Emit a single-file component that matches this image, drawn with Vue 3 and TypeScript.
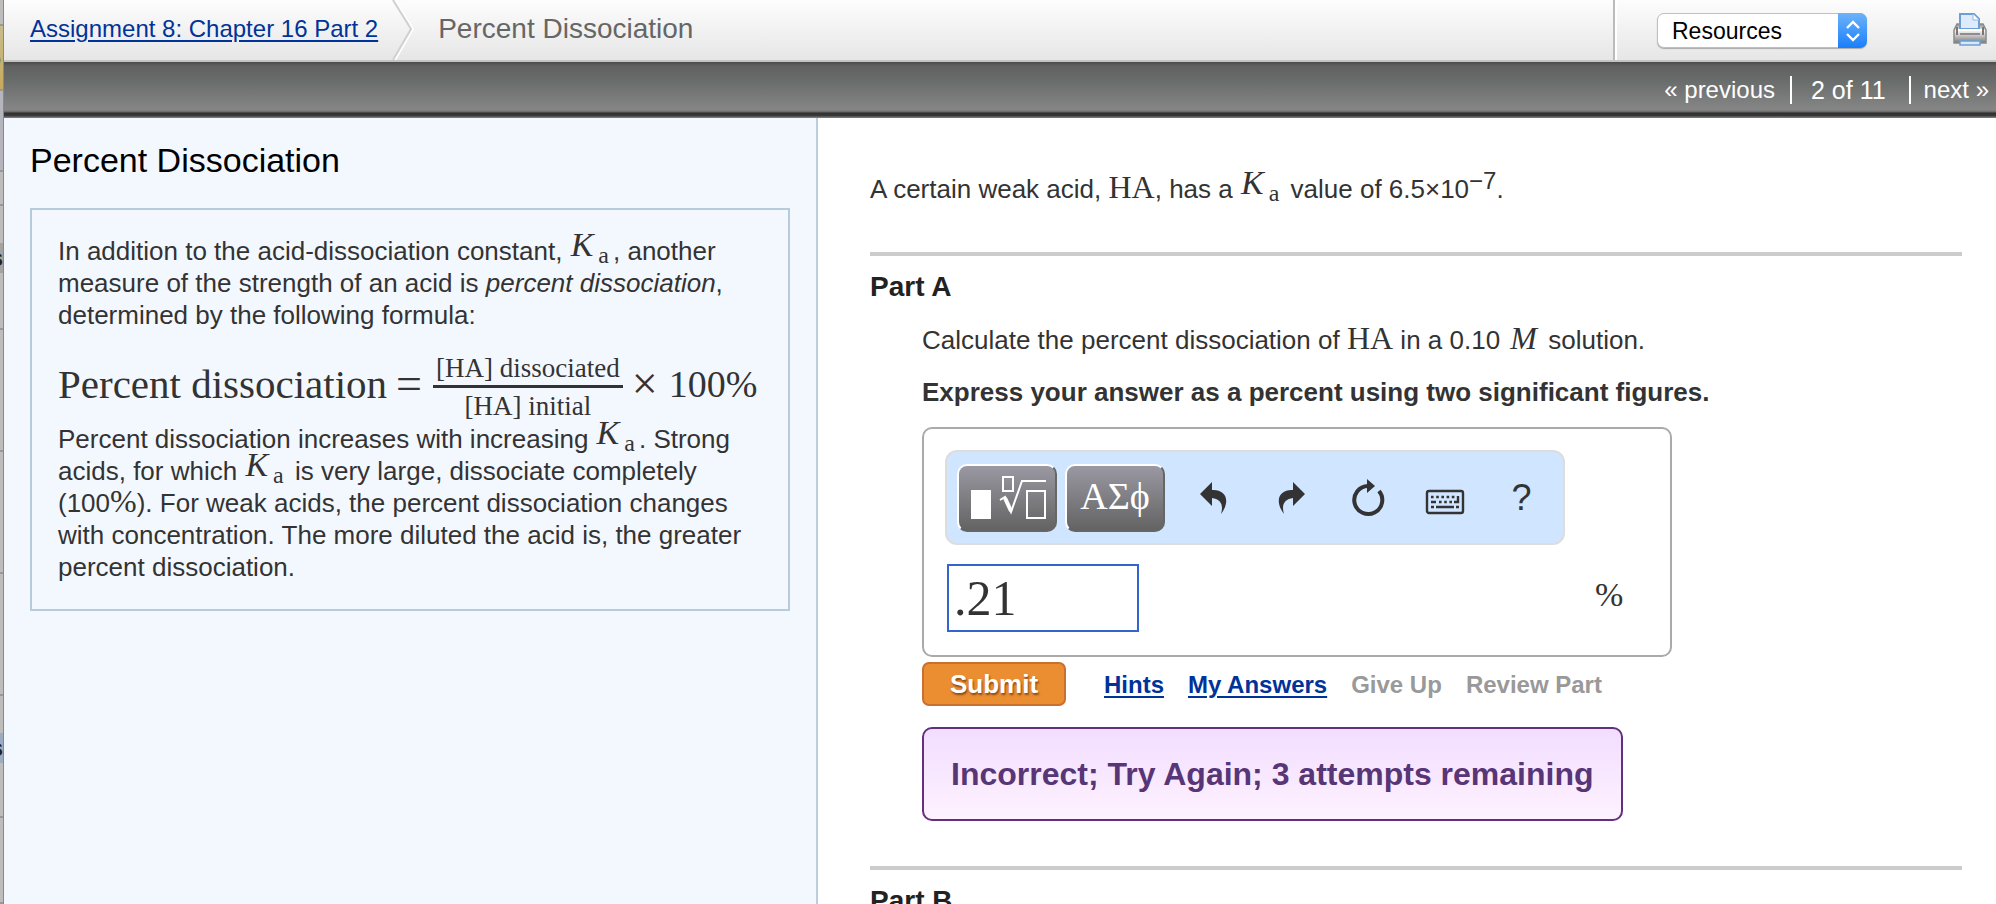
<script setup lang="ts">
import { ref } from 'vue'

interface Slice {
  height: number
  tone: string
  glyph?: string
}

const answer = ref('.21')
const resource = ref('Resources')

// Sliver of the window that sits behind this one, top to bottom.
const slices: Slice[] = [
  { height: 26, tone: 'grey' },
  { height: 65, tone: 'gold', glyph: '●' },
  { height: 81, tone: 'cool' },
  { height: 34, tone: 'grey' },
  { height: 37, tone: 'grey open' },
  { height: 30, tone: 'dark', glyph: 's' },
  { height: 57, tone: 'grey' },
  { height: 122, tone: 'grey' },
  { height: 122, tone: 'grey' },
  { height: 122, tone: 'grey' },
  { height: 37, tone: 'grey open' },
  { height: 30, tone: 'blue', glyph: 's' },
  { height: 55, tone: 'grey' },
  { height: 86, tone: 'grey' },
]
</script>

<template>
  <div class="screen">
    <div class="behind" aria-hidden="true">
      <div
        v-for="(s, i) in slices"
        :key="i"
        class="slice"
        :class="s.tone"
        :style="{ height: s.height + 'px' }"
      >{{ s.glyph }}</div>
    </div>

    <div class="page">
      <header class="crumbs">
        <a class="crumb-link" href="#">Assignment 8: Chapter 16 Part 2</a>
        <svg class="crumb-arrow" width="22" height="60" viewBox="0 0 22 60" aria-hidden="true">
          <path d="M3 0 L21 29 L3 60" fill="none" stroke="#fff" stroke-width="2" />
          <path d="M1 0 L19 29 L1 60" fill="none" stroke="#d0d0d0" stroke-width="2" />
        </svg>
        <span class="crumb-current">Percent Dissociation</span>
        <div class="tools">
          <div class="select-wrap">
            <select v-model="resource" aria-label="Resources">
              <option>Resources</option>
            </select>
            <span class="select-cap" aria-hidden="true">
              <svg width="14" height="22" viewBox="0 0 14 22">
                <path d="M1 8 L7 2 L13 8 M1 14 L7 20 L13 14" fill="none" stroke="#fff" stroke-width="2.4" />
              </svg>
            </span>
          </div>
          <button class="print" type="button" aria-label="Print">
            <svg width="34" height="34" viewBox="0 0 34 34">
              <defs>
                <linearGradient id="body" x1="0" y1="0" x2="0" y2="1">
                  <stop offset="0" stop-color="#8d8d8d" />
                  <stop offset="0.35" stop-color="#f4f4f4" />
                  <stop offset="0.6" stop-color="#c9c9c9" />
                  <stop offset="1" stop-color="#777" />
                </linearGradient>
              </defs>
              <path d="M4 11 H30 L33 17 V30 H1 V17 Z" fill="url(#body)" stroke="#8a8a8a" stroke-width="1.5" />
              <path d="M7 16 V1 H21 L26 6 V16 Z" fill="#deebfb" stroke="#6ba0d6" stroke-width="2" />
              <path d="M20 1 V7 H26" fill="#fff" stroke="#8db8e3" />
              <path d="M5 17 H29" stroke="#fff" stroke-width="2" />
              <path d="M7 21 H27" stroke="#8e8e8e" stroke-width="2" />
              <path d="M4 14 V22 M30 14 V22" stroke="#777" stroke-width="2" />
              <rect x="7" y="28" width="20" height="4" fill="#d7e8fa" stroke="#6ba0d6" stroke-width="1.5" />
            </svg>
          </button>
        </div>
      </header>

      <nav class="pager">
        <a href="#">« previous</a>
        <span class="count">2 of 11</span>
        <a href="#">next »</a>
      </nav>

      <main class="columns">
        <section class="intro">
          <h1>Percent Dissociation</h1>
          <div class="note">
            <p>
              In addition to the acid-dissociation constant, <span class="ka"><i>K</i><sub>a</sub></span>, another<br />
              measure of the strength of an acid is <em>percent dissociation</em>,<br />
              determined by the following formula:
            </p>
            <div class="formula">
              <span class="big">Percent dissociation</span>
              <span class="eq">=</span>
              <span class="frac">
                <span class="num">[HA] dissociated</span>
                <span class="den">[HA] initial</span>
              </span>
              <span class="eq">×</span>
              <span class="hundred">100%</span>
            </div>
            <p>
              Percent dissociation increases with increasing <span class="ka"><i>K</i><sub>a</sub></span>. Strong<br />
              acids, for which <span class="ka"><i>K</i><sub>a</sub></span> is very large, dissociate completely<br />
              (100<span class="math">%</span>). For weak acids, the percent dissociation changes<br />
              with concentration. The more diluted the acid is, the greater<br />
              percent dissociation.
            </p>
          </div>
        </section>

        <section class="work">
          <p class="given">
            A certain weak acid, <span class="math">HA</span>, has a <span class="ka"><i>K</i><sub>a</sub></span> value of 6.5×10<sup>−7</sup>.
          </p>

          <article class="part">
            <h2>Part A</h2>
            <div class="part-body">
              <p>Calculate the percent dissociation of <span class="math">HA</span> in a 0.10 <i class="math molar">M</i> solution.</p>
              <p class="instruct">Express your answer as a percent using two significant figures.</p>

              <form class="answer" @submit.prevent>
                <div class="toolbar">
                  <button class="pal" type="button" aria-label="Templates">
                    <svg width="80" height="46" viewBox="0 0 80 46">
                      <rect x="4" y="15" width="20" height="29" fill="#fff" />
                      <rect x="36" y="2" width="10" height="14" fill="none" stroke="#fff" stroke-width="2" />
                      <path d="M33 25 L38 22 L44 37 L55 6 H79" fill="none" stroke="#fff" stroke-width="2" />
                      <path d="M38 23 L44 36" stroke="#fff" stroke-width="4" />
                      <rect x="60" y="16" width="18" height="27" fill="none" stroke="#fff" stroke-width="2" />
                    </svg>
                  </button>
                  <button class="pal greek" type="button">ΑΣϕ</button>
                  <button class="tool" type="button" aria-label="Undo">
                    <svg width="40" height="40" viewBox="0 0 40 40">
                      <path d="M6 16 L18 4 V12 C30 11 38 21 27 36 C30 26 26 21 18 20 V28 Z" fill="#333" />
                    </svg>
                  </button>
                  <button class="tool" type="button" aria-label="Redo">
                    <svg width="40" height="40" viewBox="0 0 40 40">
                      <path d="M34 16 L22 4 V12 C10 11 2 21 13 36 C10 26 14 21 22 20 V28 Z" fill="#333" />
                    </svg>
                  </button>
                  <button class="tool" type="button" aria-label="Reset">
                    <svg width="40" height="40" viewBox="0 0 40 40">
                      <path d="M20 8 A14 14 0 1 0 31 13" fill="none" stroke="#333" stroke-width="4" />
                      <path d="M19 1 L27 8 L19 15 Z" fill="#333" />
                    </svg>
                  </button>
                  <button class="tool" type="button" aria-label="Keyboard">
                    <svg width="40" height="40" viewBox="0 0 40 40">
                      <rect x="2" y="13" width="36" height="22" rx="2" fill="none" stroke="#333" stroke-width="2.4" />
                      <path d="M6 19 H31" stroke="#333" stroke-width="2.4" stroke-dasharray="2.6 2.6" />
                      <path d="M14 24 H28" stroke="#333" stroke-width="2.4" stroke-dasharray="2.6 2.6" />
                      <path d="M6 24 H11 M6 29 H9 M11 29 H29 M31 29 H34" stroke="#333" stroke-width="2.4" />
                      <path d="M33 18 V24 H29" fill="none" stroke="#333" stroke-width="2.4" />
                    </svg>
                  </button>
                  <button class="tool help" type="button">?</button>
                </div>
                <div class="entry">
                  <input v-model="answer" type="text" aria-label="Answer" />
                  <span class="unit">%</span>
                </div>
              </form>

              <div class="actions">
                <button class="submit" type="button">Submit</button>
                <a href="#">Hints</a>
                <a href="#">My Answers</a>
                <span>Give Up</span>
                <span>Review Part</span>
              </div>

              <div class="feedback" role="status">Incorrect; Try Again; 3 attempts remaining</div>
            </div>
          </article>

          <article class="part">
            <h2>Part B</h2>
          </article>
        </section>
      </main>
    </div>
  </div>
</template>

<style>
body {
  margin: 0;
  background: #fff;
}
</style>

<style scoped>
.screen {
  display: flex;
  height: 100vh;
  overflow: hidden;
  color: #333;
  font-family: 'Liberation Sans', Arial, sans-serif;
  font-size: 26px;
  line-height: 32px;
}

p,
h1,
h2 {
  margin: 0;
}

/* window behind */
.behind {
  flex: none;
  width: 4px;
  box-sizing: border-box;
  border-right: 1px solid #888;
  overflow: hidden;
}

.slice {
  display: flex;
  align-items: center;
  justify-content: flex-end;
  box-sizing: border-box;
  border-bottom: 2px solid #999;
  font-size: 24px;
  font-weight: 700;
  color: #222;
}

.grey {
  background: #bebdbb;
}

.gold {
  background: linear-gradient(#c6bd8c, #c9a95c);
  font-size: 34px;
}

.cool {
  background: #b5b5bd;
}

.dark {
  background: #a5a3a1;
}

.blue {
  background: #9dabc1;
}

.open,
.dark,
.blue {
  border-bottom: 0;
}

/* page frame */
.page {
  display: flex;
  flex: 1;
  flex-direction: column;
  min-width: 0;
}

.crumbs {
  display: flex;
  flex: none;
  height: 60px;
  padding-left: 26px;
  background: linear-gradient(#fdfdfd, #e6e6e6);
  border-bottom: 2px solid #c4c4c4;
  line-height: 57px;
}

.crumb-link {
  color: #039;
  font-size: 24px;
  text-underline-offset: 3px;
}

.crumb-arrow {
  margin-left: 14px;
}

.crumb-current {
  margin-left: 24px;
  color: #666;
  font-size: 28px;
}

.tools {
  display: flex;
  align-items: flex-start;
  margin-left: auto;
  padding: 13px 9px 0 42px;
  border-left: 2px solid #bbb;
  box-shadow: inset 2px 0 #fff;
}

.select-wrap {
  display: flex;
  position: relative;
  width: 210px;
  height: 35px;
  margin-right: 86px;
  box-sizing: border-box;
  border: 1px solid #bfbfbf;
  border-radius: 7px;
  background: #fff;
  box-shadow: 0 1px 1px #aaa;
}

select {
  width: 100%;
  padding: 0 40px 0 14px;
  border: 0;
  background: none;
  appearance: none;
  color: #000;
  font: 23px 'Liberation Sans', Arial, sans-serif;
}

.select-cap {
  position: absolute;
  inset: -1px -1px -1px auto;
  display: flex;
  align-items: center;
  justify-content: center;
  width: 29px;
  border-radius: 0 7px 7px 0;
  background: linear-gradient(#6cb3fa, #1a7efb);
  pointer-events: none;
}

button {
  padding: 0;
  border: 0;
  background: none;
  color: inherit;
  font: inherit;
}

.print {
  display: flex;
}

.pager {
  display: flex;
  flex: none;
  align-items: center;
  justify-content: flex-end;
  height: 56px;
  padding-right: 7px;
  background: linear-gradient(#4a4a4a, #616161 4px, #666a68 16px, #868686 48px, #666 50px, #303030 51px, #3a3a3a 54px, #777 55px);
  color: #fff;
  font-size: 24px;
  line-height: 28px;
}

.pager a {
  color: #fff;
  text-decoration: none;
}

.count {
  margin: 0 13px 0 15px;
  padding: 0 23px 0 19px;
  border: solid #fff;
  border-width: 0 2px;
  font-size: 25px;
}

.columns {
  display: grid;
  flex: 1;
  grid-template-columns: minmax(0, 407fr) minmax(0, 589fr);
  min-height: 0;
}

/* left column */
.intro {
  padding: 22px 26px;
  background: #f3f8ff;
  border-right: 2px solid #bccddd;
}

h1 {
  color: #000;
  font-size: 34px;
  font-weight: 400;
  line-height: 40px;
}

.note {
  margin-top: 28px;
  padding: 25px 26px 26px;
  border: 2px solid #b8cbdb;
}

.math,
.ka,
.formula,
.greek,
.unit,
.entry input {
  font-family: 'Liberation Serif', 'Times New Roman', serif;
}

.math {
  font-size: 32px;
  line-height: 0;
}

.molar {
  margin: 0 4px 0 3px;
}

.ka {
  display: inline-block;
  margin: 0 4px 0 1px;
  line-height: 0;
}

.ka i {
  position: relative;
  top: -4px;
  font-size: 34px;
  line-height: 0;
}

.ka sub {
  margin-left: 5px;
  font-size: 24px;
  line-height: 0;
  vertical-align: -3px;
}

sup {
  font-size: 24px;
  line-height: 0;
  vertical-align: 9px;
}

.formula {
  display: flex;
  align-items: center;
  height: 72px;
  margin-top: 20px;
  font-size: 38px;
  line-height: 36px;
  white-space: nowrap;
}

.big {
  font-size: 41px;
}

.big,
.eq,
.hundred {
  padding-bottom: 6px;
}

.eq {
  margin: 0 11px 0 9px;
  font-size: 46px;
}

.frac {
  display: flex;
  flex-direction: column;
  align-items: center;
  font-size: 27px;
}

.num {
  padding: 0 3px;
  border-bottom: 3px solid #333;
  line-height: 34px;
}

/* right column */
.work {
  padding: 55px 34px 0 52px;
}

.given {
  padding-bottom: 47px;
}

.part {
  border-top: 4px solid #ccc;
}

h2 {
  margin-top: 14px;
  color: #222;
  font-size: 28px;
  line-height: 34px;
}

.part-body {
  padding: 20px 0 45px 52px;
}

.instruct {
  margin-top: 20px;
  font-weight: 700;
}

.answer {
  box-sizing: border-box;
  width: 750px;
  max-width: 100%;
  height: 230px;
  margin-top: 19px;
  padding: 21px;
  border: 2px solid #aaa;
  border-radius: 10px;
}

.toolbar {
  display: flex;
  align-items: center;
  box-sizing: border-box;
  width: 620px;
  height: 95px;
  padding-left: 10px;
  border: 2px solid #ddd;
  border-radius: 12px;
  background: #d0e5ff;
}

.pal {
  display: flex;
  align-items: center;
  justify-content: center;
  box-sizing: border-box;
  width: 100px;
  height: 68px;
  margin-right: 8px;
  border: 2px solid;
  border-color: #fff #666 #666 #fff;
  border-radius: 10px;
  background: linear-gradient(#9a99a3, #636363);
  color: #fff;
}

.greek {
  margin-right: 10px;
  padding-bottom: 4px;
  font-size: 38px;
}

.tool {
  display: flex;
  align-items: center;
  justify-content: center;
  width: 77px;
  height: 68px;
}

.help {
  font-size: 36px;
}

.entry {
  display: flex;
  align-items: center;
  gap: 456px;
  margin: 19px 0 0 2px;
}

.entry input {
  box-sizing: border-box;
  width: 192px;
  height: 68px;
  padding: 0 5px;
  border: 2px solid #36c;
  outline: 0;
  color: #333;
  font-size: 50px;
}

.unit {
  padding-bottom: 6px;
  font-size: 34px;
}

.actions {
  display: flex;
  align-items: center;
  gap: 24px;
  margin-top: 5px;
  color: #999;
  font-size: 24px;
  font-weight: 700;
}

.actions a,
.actions span {
  padding-top: 2px;
}

.actions a {
  color: #039;
  text-underline-offset: 3px;
}

.submit {
  width: 144px;
  height: 44px;
  margin-right: 14px;
  border: 2px solid #c86f31;
  border-radius: 7px;
  background: #eb8d31;
  color: #fff;
  font-size: 26px;
  text-shadow: 1px 2px 2px #8a4a12;
}

.feedback {
  box-sizing: border-box;
  width: fit-content;
  margin-top: 21px;
  padding: 25px 27px;
  border: 2px solid #63307f;
  border-radius: 10px;
  background: linear-gradient(#f2ddff, #fef2ff);
  color: #573577;
  font-size: 32px;
  font-weight: 700;
  line-height: 40px;
}
</style>
